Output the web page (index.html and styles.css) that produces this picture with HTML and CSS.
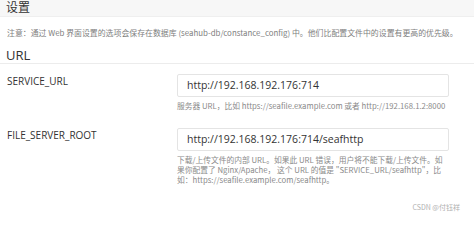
FILE: index.html
```html
<!DOCTYPE html>
<html lang="zh-CN">
<head>
<meta charset="utf-8">
<title>设置</title>
<link rel="stylesheet" href="styles.css">
</head>
<body>
<div class="page">
  <div class="top-bar">设置</div>
  <p class="notice">注意：通过 Web 界面设置的选项会保存在数据库 (seahub-db/constance_config) 中。他们比配置文件中的设置有更高的优先级。</p>
  <h3 class="section-title">URL</h3>
  <div class="field-row first">
    <div class="field-label">SERVICE_URL</div>
    <div class="field-body">
      <div class="text-input">http://192.168.192.176:714</div>
      <p class="help">服务器 URL，比如 https://seafile.example.com 或者 http://192.168.1.2:8000</p>
    </div>
  </div>
  <div class="field-row second">
    <div class="field-label">FILE_SERVER_ROOT</div>
    <div class="field-body">
      <div class="text-input">http://192.168.192.176:714/seafhttp</div>
      <p class="help">下载/上传文件的内部 URL。如果此 URL 错误，用户将不能下载/上传文件。如果你配置了 Nginx/Apache， 这个 URL 的值是 "SERVICE_URL/seafhttp"，比如：https://seafile.example.com/seafhttp。</p>
    </div>
  </div>
  <div class="watermark">CSDN @付钰祥</div>
</div>
</body>
</html>
```
FILE: styles.css
```css
html, body {
  margin: 0;
  padding: 0;
  background: #ffffff;
}
body {
  font-family: "Open Sans", "Noto Sans CJK SC", sans-serif;
  color: #333333;
  width: 474px;
  height: 217px;
  overflow: hidden;
}
.page {
  display: flex;
  flex-direction: column;
}
.top-bar {
  height: 16px;
  line-height: 16px;
  font-size: 12px;
  padding-left: 6px;
  background: #f7f7f7;
  border-bottom: 1px solid #efefef;
  color: #333;
}
.notice {
  margin: 10px 0 0 0;
  padding-left: 7px;
  font-family: "Noto Sans CJK SC", sans-serif;
  font-size: 7.9px;
  line-height: 12px;
  color: #808080;
  white-space: nowrap;
}
.section-title {
  margin: 8px 0 0 0;
  padding-left: 6px;
  font-size: 13px;
  font-weight: normal;
  line-height: 16px;
  color: #333;
  border-bottom: 1px solid #ececec;
}
.field-row {
  display: grid;
  grid-template-columns: 177px 272px;
}
.field-row.first {
  margin-top: 10px;
}
.field-row.second {
  margin-top: 17px;
}
.field-label {
  padding-left: 7px;
  font-size: 10px;
  line-height: 14px;
  color: #333;
}
.text-input {
  height: 21px;
  line-height: 21px;
  border: 1px solid #e4e4e4;
  border-radius: 2px;
  padding-left: 9px;
  font-size: 10.5px;
  color: #333;
}
.help {
  margin: 4px 0 0 0;
  font-family: "Noto Sans CJK SC", sans-serif;
  font-size: 7.75px;
  line-height: 10px;
  color: #8a8a8a;
}
.watermark {
  margin-top: 17px;
  align-self: flex-end;
  padding-right: 14px;
  font-family: "Noto Sans CJK SC", sans-serif;
  font-size: 7px;
  line-height: 10px;
  color: #b0b0b0;
}
```
